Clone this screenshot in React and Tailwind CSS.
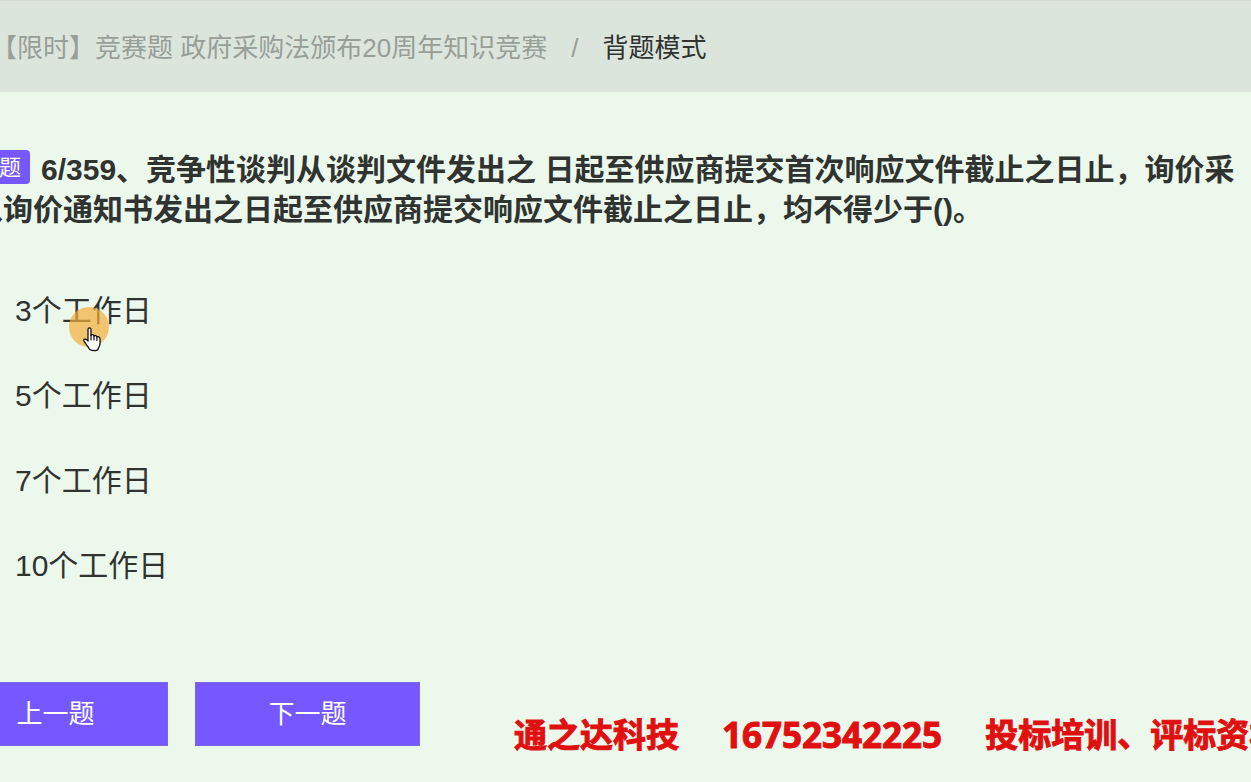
const OPTIONS = ['3个工作日', '5个工作日', '7个工作日', '10个工作日'];

function HandCursor() {
  return (
    <svg width="18" height="25" viewBox="0 0 18 25" fill="none">
      <path
        d="M5 2.2C5 .4 8 .4 8 2.2V8.4C8.6 7.2 10.9 7.6 11 9C11.8 8.1 13.7 8.5 13.9 9.9C15 9.2 17 9.8 17 11.6V16.5C17 19 15.4 20.4 15.2 22C14.4 24.2 7.4 24.2 6.2 21.8C5.6 20.2 3.6 18.2 2.6 16.4C1.8 15.2.4 14 .8 12.8C1.5 11.4 3.6 12.2 5 14Z"
        fill="#fff"
        stroke="#111"
        strokeWidth="1.3"
        strokeLinejoin="round"
      />
      <path d="M8 8V13M11 9V13M13.9 10V13.4" stroke="#111" strokeWidth="1.2" strokeLinecap="round" />
    </svg>
  );
}

export default function App() {
  const navButton =
    'h-16 w-[225px] shrink-0 border border-[#7867e2] bg-[#7558ff] text-[26px] text-white transition-colors hover:bg-[#6848f5]';

  return (
    <div className="min-h-screen overflow-hidden bg-[#edf8ed] font-['Liberation_Sans','Noto_Sans_CJK_SC',sans-serif] text-[#303430]">
      {/* Breadcrumb */}
      <nav className="-ml-[9px] flex h-[92px] items-center gap-6 border-t border-[#d2d9d2] bg-[#dce5dc] pt-1 text-[26px] whitespace-nowrap">
        <a href="#contest" className="text-[#989e98]">
          【限时】竞赛题 政府采购法颁布20周年知识竞赛
        </a>
        <span className="text-[#989e98]">/</span>
        <span>背题模式</span>
      </nav>

      <main className="-ml-[57px] pt-[58px]">
        {/* Question */}
        <h1 className="pl-[30px] text-[30px] leading-10 font-bold">
          <span className="mr-[11px] inline-block h-[34px] rounded-sm bg-[#7558ff] pt-[2px] pr-[9px] pl-[26px] align-top text-[22px] leading-8 font-normal text-white">
            题
          </span>
          6/359、竞争性谈判从谈判文件发出之 日起至供应商提交首次响应文件截止之日止，询价采从询价通知书发出之日起至供应商提交响应文件截止之日止，均不得少于()。
        </h1>

        {/* Answers */}
        <ul className="mt-[38px] pl-[72px]">
          {OPTIONS.map((option, index) => (
            <li key={option} className="flex h-[85px] items-center">
              <button type="button" className="relative cursor-pointer text-[30px]">
                {option}
                {index === 0 && (
                  <span className="pointer-events-none absolute top-[19px] left-[54px] size-10 rounded-full bg-[#f2ae3b]/70">
                    <span className="absolute top-5 left-[14px]">
                      <HandCursor />
                    </span>
                  </span>
                )}
              </button>
            </li>
          ))}
        </ul>

        <div className="mt-[74px] flex items-start">
          <button type="button" className={navButton}>
            上一题
          </button>
          <button type="button" className={`ml-[27px] ${navButton}`}>
            下一题
          </button>

          {/* Scrolling notice */}
          <p className="ml-[94px] flex min-w-0 flex-1 items-center gap-[43px] overflow-hidden pt-[35px] font-['Open_Sans','Noto_Sans_CJK_SC',sans-serif] text-[33px] leading-9 font-bold whitespace-nowrap text-[#e01010] [-webkit-text-stroke:1px_#e01010]">
            <span>通之达科技</span>
            <span className="text-[35px]">16752342225</span>
            <span>投标培训、评标资格</span>
          </p>
        </div>
      </main>
    </div>
  );
}
